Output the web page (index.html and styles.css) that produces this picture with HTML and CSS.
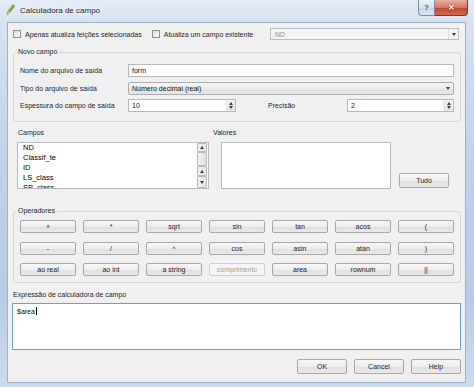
FILE: index.html
```html
<!DOCTYPE html>
<html lang="pt">
<head>
  <meta charset="UTF-8" />
  <title>Calculadora de campo</title>
  <link rel="stylesheet" href="styles.css">
</head>
<body>

  <div class="window">
    <div class="titlebar">
      <svg class="app-icon" viewBox="0 0 9 11">
        <path d="M1 10.5 L2.2 7 L7.2 0.8 L8.6 2 L3.6 8.4 Z" fill="#8fc23a" stroke="#46701a" stroke-width="0.7"/>
        <path d="M1 10.5 L2.2 7 L3.6 8.4 Z" fill="#f1d548"/>
      </svg>
      <span class="title">Calculadora de campo</span>
      <div class="caption">
        <span class="cap-btn help">?</span>
        <span class="cap-btn close">✕</span>
      </div>
    </div>

    <div class="dialog">
      <div class="top-row">
        <label class="check"><span class="box"></span>Apenas atualiza feições selecionadas</label>
        <label class="check"><span class="box"></span>Atualiza um campo existente</label>
        <div class="combo">
          <span>ND</span>
          <span class="drop"><i class="tri-down"></i></span>
        </div>
      </div>

      <fieldset class="group group-new">
        <legend>Novo campo</legend>
        <div class="form-row">
          <span class="lbl">Nome do arquivo de saída</span>
          <div class="field text">form</div>
        </div>
        <div class="form-row">
          <span class="lbl">Tipo do arquivo de saída</span>
          <div class="field select">Número decimal (real)<i class="tri-down"></i></div>
        </div>
        <div class="form-row">
          <span class="lbl">Espessura do campo de saída</span>
          <div class="field spin">10<span class="spin-arrows"><i class="tri-up"></i><i class="tri-down"></i></span></div>
          <span class="lbl lbl-prec">Precisão</span>
          <div class="field spin spin-prec">2<span class="spin-arrows"><i class="tri-up"></i><i class="tri-down"></i></span></div>
        </div>
      </fieldset>

      <div class="lists">
        <div class="col-fields">
          <div class="col-label">Campos</div>
          <div class="listbox">
            <ul class="items">
              <li>ND</li>
              <li>Classif_te</li>
              <li>ID</li>
              <li>LS_class</li>
              <li>SP_class</li>
            </ul>
            <div class="scrollbar">
              <span class="sb-btn sb-top"><i class="tri-up"></i></span>
              <span class="sb-thumb"></span>
              <span class="sb-btn sb-mid"><i class="tri-up"></i></span>
              <span class="sb-btn sb-bot"><i class="tri-down"></i></span>
            </div>
          </div>
        </div>
        <div class="col-values">
          <div class="col-label">Valores</div>
          <div class="values-box"></div>
        </div>
        <button class="btn btn-wide btn-all">Tudo</button>
      </div>

      <fieldset class="group group-ops">
        <legend>Operadores</legend>
        <div class="ops">
          <button class="btn">+</button>
          <button class="btn">*</button>
          <button class="btn">sqrt</button>
          <button class="btn">sin</button>
          <button class="btn">tan</button>
          <button class="btn">acos</button>
          <button class="btn">(</button>

          <button class="btn">-</button>
          <button class="btn">/</button>
          <button class="btn">^</button>
          <button class="btn">cos</button>
          <button class="btn">asin</button>
          <button class="btn">atan</button>
          <button class="btn">)</button>

          <button class="btn">ao real</button>
          <button class="btn">ao int</button>
          <button class="btn">a string</button>
          <button class="btn disabled">comprimento</button>
          <button class="btn">area</button>
          <button class="btn">rownum</button>
          <button class="btn">||</button>
        </div>
      </fieldset>

      <div class="expr-label">Expressão de calculadora de campo</div>
      <div class="expr-box">$area<span class="caret"></span></div>

      <div class="actions">
        <button class="btn btn-wide">OK</button>
        <button class="btn btn-wide">Cancel</button>
        <button class="btn btn-wide">Help</button>
      </div>
    </div>
  </div>

</body>
</html>
```

FILE: styles.css
```css
* {
  box-sizing: border-box;
}

body {
  margin: 0;
  width: 474px;
  height: 387px;
  overflow: hidden;
  font-family: 'Liberation Sans', Arial, sans-serif;
  font-size: 7px;
  color: #1e1e1e;
  background: #c6d8ec;
}

.window {
  width: 474px;
  height: 387px;
  padding: 0 8px 0 7px;
  background: linear-gradient(180deg, #e4ecf6 0, #d6e3f2 22px, #bed2e9 160px, #b6cce6 300px, #cbdcef 387px);
}

/* title bar */
.titlebar {
  height: 22px;
  display: flex;
  align-items: flex-start;
  margin: 0 -2px 0 -1px;
}

.app-icon {
  width: 9px;
  height: 11px;
  margin: 4px 5px 0 0;
}

.title {
  font-size: 8px;
  line-height: 22px;
  color: #1a1a1a;
  text-shadow: 0 0 5px #fff, 0 0 3px #fff;
}

.caption {
  margin-left: auto;
  display: flex;
}

.cap-btn {
  height: 16px;
  display: flex;
  align-items: center;
  justify-content: center;
  border: 1px solid #7d8ca3;
  border-top: none;
}

.help {
  width: 17px;
  border-radius: 0 0 0 4px;
  background: linear-gradient(#edf2f8, #d9e3ef 50%, #c6d4e5 51%, #d9e4f0);
  color: #4a5870;
  font-size: 8px;
  font-weight: bold;
}

.close {
  width: 33px;
  border-left: none;
  border-color: #7a3a2e;
  border-radius: 0 0 4px 0;
  background: linear-gradient(#eab0a3, #d8755f 50%, #c5452c 51%, #d3664b);
  color: #fff;
  font-size: 8px;
  font-weight: bold;
  text-shadow: 0 0 2px #5a1a10;
}

/* dialog body */
.dialog {
  height: 361px;
  background: #f0f0f0;
  border: 1px solid #9fb0c6;
  padding: 5px 4px 0 5px;
}

.top-row {
  display: flex;
  align-items: center;
  height: 12px;
}

.check {
  display: flex;
  align-items: center;
  gap: 4px;
}

.check + .check {
  margin-left: 10px;
}

.box {
  width: 8px;
  height: 8px;
  border: 1px solid #909090;
  background: linear-gradient(135deg, #dcdcdc, #fbfbfb);
}

.combo {
  margin-left: auto;
  margin-right: 2px;
  width: 189px;
  height: 12px;
  border: 1px solid #babec3;
  background: #f4f4f4;
  display: flex;
  align-items: center;
  padding-left: 4px;
  color: #8e8e8e;
}

.combo .drop {
  margin-left: auto;
  width: 10px;
  height: 100%;
  border-left: 1px solid #dadada;
  display: flex;
  align-items: center;
  justify-content: center;
}

.tri-down,
.tri-up {
  display: block;
  width: 0;
  height: 0;
  border-left: 2px solid transparent;
  border-right: 2px solid transparent;
}

.tri-down { border-top: 3px solid #3a3a3a; }
.tri-up { border-bottom: 3px solid #3a3a3a; }

/* group boxes */
.group {
  margin: 0;
  min-width: 0;
  border: 1px solid #d3d6d9;
  border-radius: 3px;
}

.group legend {
  padding: 0 2px;
  margin-left: -4px;
  font-size: 7px;
  line-height: 8px;
}

.group-new {
  margin-top: 8px;
  padding: 8px 6px 9px 6px;
}

.form-row {
  display: flex;
  align-items: center;
  height: 13px;
}

.form-row + .form-row { margin-top: 5px; }
.form-row:last-child { margin-top: 4px; }

.lbl {
  width: 108px;
  flex: none;
}

.field {
  height: 13px;
  border: 1px solid #b6babf;
  background: #fff;
  display: flex;
  align-items: center;
  padding-left: 3px;
  color: #111;
}

.field.text { flex: 1; }

.field.select {
  flex: 1;
  border-color: #adadad;
  border-radius: 2px;
  background: linear-gradient(#f5f5f5, #ededed 50%, #e0e0e0 51%, #e7e7e7);
}

.select .tri-down {
  margin-left: auto;
  margin-right: 3px;
}

.spin { width: 108px; }

.lbl-prec {
  width: auto;
  margin-left: 32px;
}

.spin-prec {
  width: 107px;
  margin-left: auto;
}

.spin-arrows {
  margin-left: auto;
  width: 9px;
  height: 100%;
  display: flex;
  flex-direction: column;
  justify-content: space-evenly;
  align-items: center;
  background: linear-gradient(#f4f4f4, #e4e4e4);
  border-left: 1px solid #e0e0e0;
}

/* fields / values */
.lists {
  display: flex;
  align-items: flex-end;
  margin-top: 6px;
}

.col-label {
  line-height: 10px;
  margin-bottom: 4px;
}

.col-fields {
  margin-left: 4px;
  width: 192px;
}

.col-fields .col-label { padding-left: 1px; }

.listbox {
  height: 47px;
  border: 1px solid #b6babf;
  background: #fff;
  display: flex;
}

.items {
  list-style: none;
  margin: 0;
  padding: 0 0 0 5px;
  flex: 1;
  overflow: hidden;
  font-size: 7.5px;
  line-height: 10px;
  color: #000;
}

.scrollbar {
  width: 10px;
  margin-right: 1px;
  display: flex;
  flex-direction: column;
}

.sb-btn,
.sb-thumb {
  display: flex;
  align-items: center;
  justify-content: center;
  border: 1px solid #b9b9b9;
  border-radius: 1px;
  background: linear-gradient(90deg, #f3f3f3, #e2e2e2);
}

.sb-top { height: 9px; }
.sb-thumb { height: 14px; }
.sb-mid { height: 10px; }
.sb-bot { height: 12px; }

.col-values { margin-left: 4px; }

.values-box {
  margin-left: 8px;
  width: 170px;
  height: 47px;
  border: 1px solid #b6babf;
  background: #fff;
}

/* buttons */
.btn {
  font-family: inherit;
  font-size: 7px;
  color: #1e1e1e;
  padding: 0;
  height: 13px;
  border: 1px solid #a8a8a8;
  border-radius: 2px;
  background: linear-gradient(#f7f7f7, #eeeeee 50%, #e0e0e0 51%, #e9e9e9);
}

.btn.disabled {
  background: #f5f5f5;
  border-color: #cdcdcd;
  color: #a3a3a3;
}

.btn-wide {
  width: 50px;
  height: 15px;
}

.btn-all {
  margin-left: 8px;
  margin-bottom: 1px;
}

.group-ops {
  margin-top: 18px;
  padding: 5px 6px 6px 6px;
}

.ops {
  display: grid;
  grid-template-columns: repeat(7, 56px);
  grid-auto-rows: 13px;
  column-gap: 7px;
  row-gap: 8.5px;
}

/* expression */
.expr-label {
  margin-top: 7px;
  line-height: 10px;
}

.expr-box {
  margin: 3px 0 0 -1px;
  height: 47px;
  border: 1px solid #6a9fd4;
  background: #fff;
  padding: 3px 4px;
  line-height: 10px;
  color: #111;
}

.caret {
  display: inline-block;
  width: 1px;
  height: 8px;
  margin-left: 1px;
  vertical-align: -1px;
  background: #000;
}

.actions {
  display: flex;
  justify-content: flex-end;
  gap: 7px;
  margin-top: 9px;
}
```
